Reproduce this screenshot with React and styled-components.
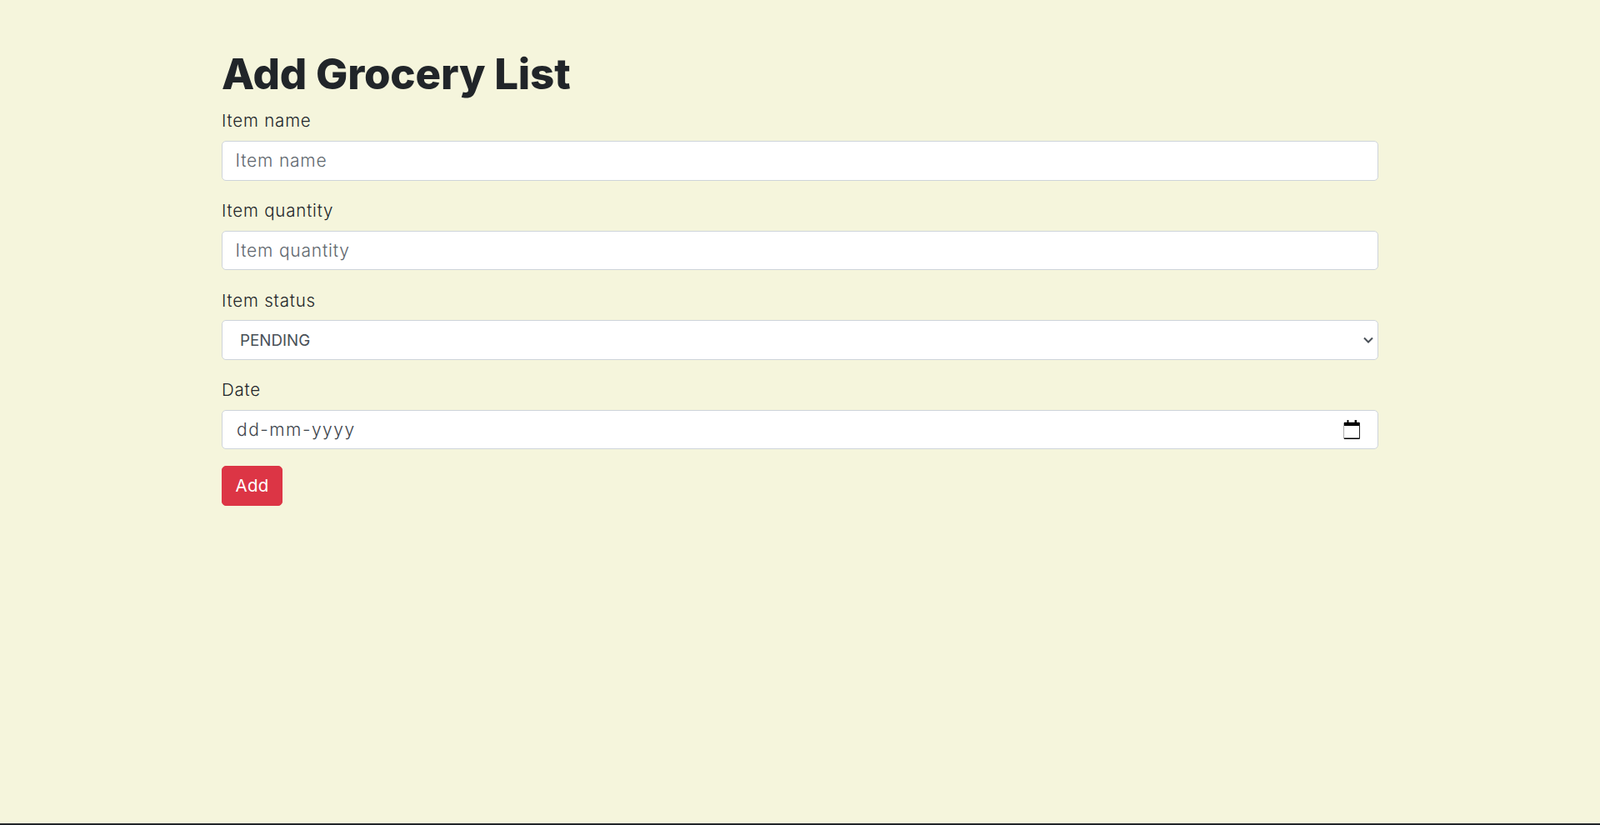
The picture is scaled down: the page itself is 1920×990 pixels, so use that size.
import styled, { createGlobalStyle } from "styled-components";

const GlobalStyle = createGlobalStyle`
  * {
    box-sizing: border-box;
  }
  body {
    margin: 0;
    background-color: #f5f5dc;
    font-family: "Inter", "Liberation Sans", sans-serif;
    color: #212529;
  }
`;

const FIELD_FONT = `"Inter", "Liberation Sans", sans-serif`;

const App = () => {
  return (
    <Page>
      <GlobalStyle />
      <Main>
        <Title>Add Grocery List</Title>
        <form onSubmit={(e) => e.preventDefault()}>
          <FieldGroup>
            <Label htmlFor="name">Item name</Label>
            <TextInput id="name" type="text" placeholder="Item name" />
          </FieldGroup>
          <FieldGroup>
            <Label htmlFor="quantity">Item quantity</Label>
            <TextInput id="quantity" type="text" placeholder="Item quantity" />
          </FieldGroup>
          <FieldGroup>
            <Label htmlFor="status">Item status</Label>
            <Select id="status" defaultValue="PENDING">
              <option value="PENDING">PENDING</option>
              <option value="BOUGHT">BOUGHT</option>
            </Select>
          </FieldGroup>
          <DateGroup>
            <Label htmlFor="date">Date</Label>
            <DateBox>
              <DateInput id="date" type="text" defaultValue="dd-mm-yyyy" />
              <CalendarIcon viewBox="0 0 20 21" aria-hidden="true">
                <path
                  fillRule="evenodd"
                  d="M4.500 0h2.200v2.500h6.600V0h2.200v2.500h2.500c.6 0 1 .4 1 1V20c0 .6-.4 1-1 1h-15.500c-.6 0-1-.4-1-1V3.500c0-.6.4-1 1-1h2.500V0zM1.800 6.500v13.200h16.400V6.500H1.800z"
                />
              </CalendarIcon>
            </DateBox>
          </DateGroup>
          <AddButton type="submit">Add</AddButton>
        </form>
      </Main>
      <BottomLine />
    </Page>
  );
};

export default App;

const Page = styled.div`
  min-height: 100vh;
  display: flex;
  flex-direction: column;
`;

const Main = styled.main`
  flex: 1;
  width: 1388px;
  margin: 0 auto;
  padding-top: 55px;
`;

const Title = styled.h1`
  margin: 0 0 9px;
  font-size: 51px;
  font-weight: 800;
  line-height: 68px;
  letter-spacing: -0.2px;
  color: #212529;
`;

const FieldGroup = styled.div`
  margin-bottom: 23.200px;
`;

const DateGroup = styled.div`
  margin-bottom: 20px;
`;

const Label = styled.label`
  display: block;
  margin-bottom: 11.800px;
  font-size: 20.500px;
  font-weight: 300;
  line-height: 25px;
  letter-spacing: 0.800px;
  color: #212529;
`;

const fieldBox = `
  display: block;
  width: 100%;
  height: 47.800px;
  background-color: #fff;
  border: 1px solid #ced4da;
  border-radius: 5px;
  outline: none;
`;

const TextInput = styled.input`
  ${fieldBox}
  padding: 0 15.500px;
  font-family: ${FIELD_FONT};
  font-size: 21px;
  font-weight: 300;
  letter-spacing: 0.800px;
  color: #495057;

  &::placeholder {
    color: #60676e;
    opacity: 1;
  }
`;

const Select = styled.select`
  ${fieldBox}
  appearance: none;
  padding: 0 40px 0 21px;
  font-family: ${FIELD_FONT};
  font-size: 18.800px;
  font-weight: 400;
  color: #495057;
  background-image: url("data:image/svg+xml,%3csvg xmlns='http://www.w3.org/2000/svg' viewBox='0 0 12 12'%3e%3cpath fill='none' stroke='%23495057' stroke-width='2' d='M1 3.500l5 5 5-5'/%3e%3c/svg%3e");
  background-repeat: no-repeat;
  background-position: right 5px center;
  background-size: 12px 12px;
`;

const DateBox = styled.div`
  ${fieldBox}
  height: 46.800px;
  display: flex;
  align-items: center;
  padding: 0 20px 0 17px;
`;

const DateInput = styled.input`
  flex: 1;
  min-width: 0;
  border: 0;
  padding: 0;
  outline: none;
  background: transparent;
  font-family: ${FIELD_FONT};
  font-size: 21px;
  font-weight: 300;
  letter-spacing: 1.500px;
  color: #3d444b;
`;

const CalendarIcon = styled.svg`
  width: 22px;
  height: 23px;
  flex-shrink: 0;
  fill: #000;
`;

const AddButton = styled.button`
  display: block;
  width: 73px;
  height: 47.800px;
  padding: 0;
  border: 1px solid #dc3545;
  border-radius: 5px;
  background-color: #dc3545;
  color: #fff;
  font-family: ${FIELD_FONT};
  font-size: 20.500px;
  font-weight: 400;
  letter-spacing: 0.2px;
`;

const BottomLine = styled.div`
  height: 2px;
  background-color: #212529;
`;
